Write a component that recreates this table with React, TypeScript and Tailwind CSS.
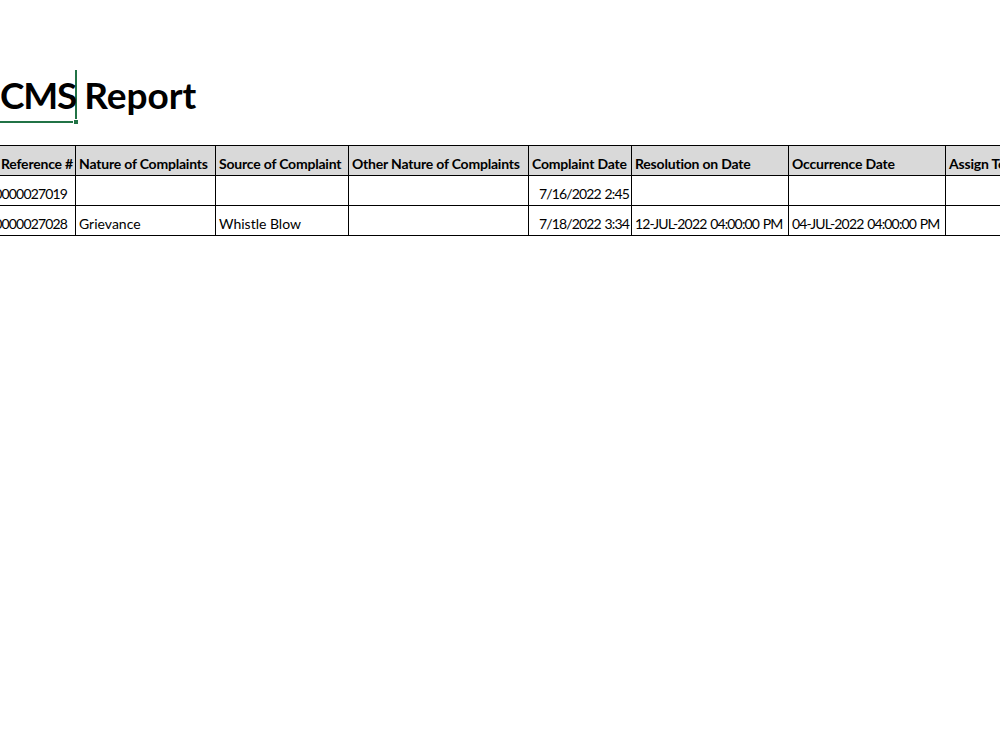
const columns = [
  { label: 'Reference #', w: 'w-[100px]' },
  { label: 'Nature of Complaints', w: 'w-[140px]' },
  { label: 'Source of Complaint', w: 'w-[133px]' },
  { label: 'Other Nature of Complaints', w: 'w-[180px]' },
  { label: 'Complaint Date', w: 'w-[103px]' },
  { label: 'Resolution on Date', w: 'w-[157px]' },
  { label: 'Occurrence Date', w: 'w-[157px]' },
  { label: 'Assign To', w: 'w-[120px]' },
];

const rows = [
  ['0000027019', '', '', '', '7/16/2022 2:45', '', '', ''],
  ['0000027028', 'Grievance', 'Whistle Blow', '', '7/18/2022 3:34', '12-JUL-2022 04:00:00 PM', '04-JUL-2022 04:00:00 PM', ''],
];

// numbers and dates sit on the right like in the sheet
const rightAligned = [0, 4];
const digits = [0, 4, 5, 6];

export default function App() {
  return (
    <div className="relative w-[1000px] h-[750px] bg-white overflow-hidden text-black font-['Lato','Open_Sans',sans-serif]">
      {/* title cell, selected */}
      <div className="mt-[70px] relative w-[77px] h-[53px] border-r-2 border-b-2 border-[#217346] whitespace-nowrap">
        <div className="absolute left-[0px] bottom-[8px] text-[37px] font-bold leading-none">
          <span className="tracking-[-1.2px]">CMS</span>
          <span className="ml-[8px]">Report</span>
        </div>
        <div className="absolute -right-[4px] -bottom-[4px] w-[6px] h-[6px] bg-[#217346] border border-white" />
      </div>

      {/* sheet */}
      <div className="mt-[22px] -ml-[25px] flex flex-col w-max border-t border-l border-black text-[14px] leading-[17px]">
        <div className="flex bg-[#d9d9d9] font-bold tracking-[-0.2px]">
          {columns.map((c, i) => (
            <div
              key={c.label}
              className={`${c.w} h-[30px] shrink-0 border-r border-b border-black flex items-end pb-[3px] whitespace-nowrap overflow-hidden ${
                i === 0 ? 'justify-end pr-[2px]' : 'pl-[3px]'
              }`}
            >
              {c.label}
            </div>
          ))}
        </div>
        {rows.map((r, ri) => (
          <div key={ri} className="flex">
            {r.map((v, ci) => (
              <div
                key={ci}
                className={`${columns[ci].w} h-[30px] shrink-0 border-r border-b border-black flex items-end pb-[3px] whitespace-nowrap overflow-hidden ${
                  rightAligned.includes(ci) ? 'justify-end' : 'pl-[3px]'
                } ${ci === 0 ? 'pr-[8px]' : ci === 4 ? 'pr-[2px]' : ''} ${
                  digits.includes(ci) ? 'tracking-[-0.85px] [word-spacing:1px]' : ''
                }`}
              >
                {v}
              </div>
            ))}
          </div>
        ))}
      </div>
    </div>
  );
}
